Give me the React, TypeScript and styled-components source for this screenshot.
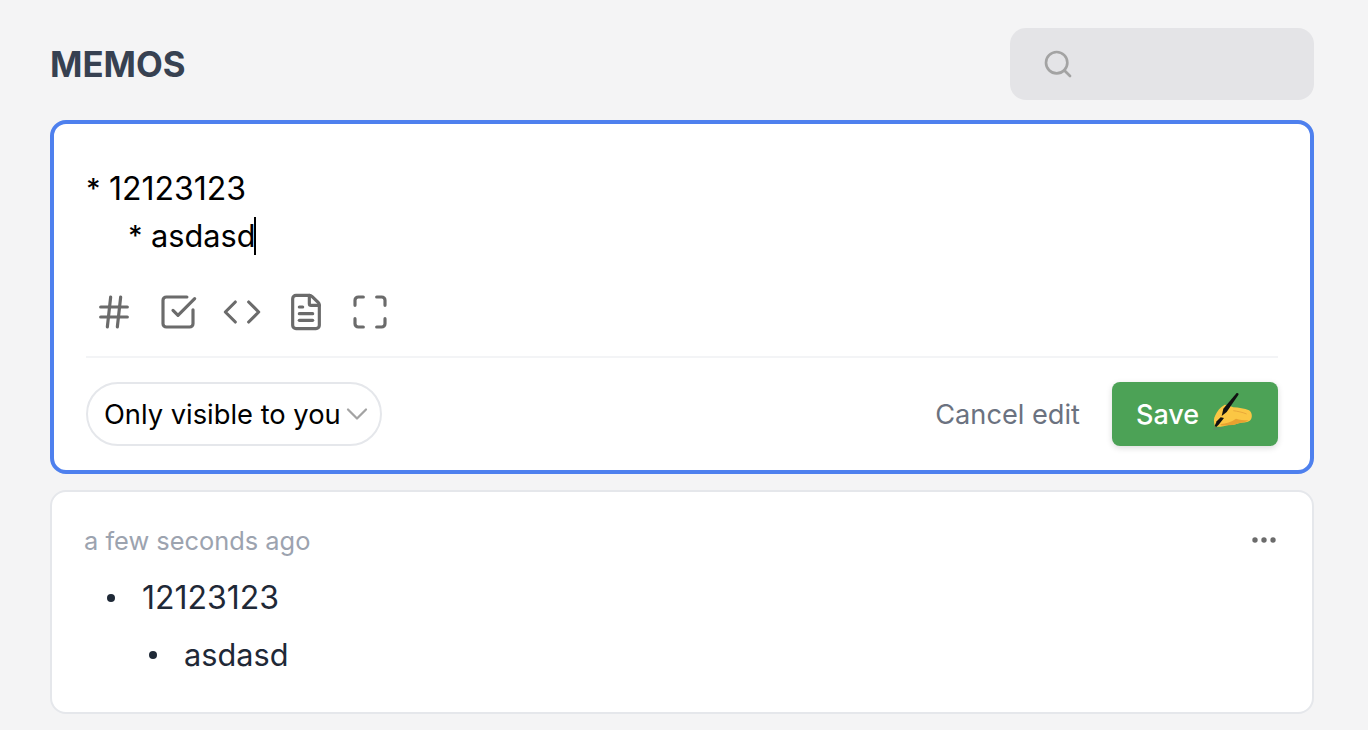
import React from "react";
import styled, { createGlobalStyle } from "styled-components";
import { Search, Hash, SquareCheckBig, Code, FileText, Maximize, ChevronDown } from "lucide-react";

const Global = createGlobalStyle`
  html, body { margin: 0; padding: 0; background: #f4f4f5; height: 100%; overflow: hidden; }
  body { font-family: Inter, "Liberation Sans", sans-serif; }
`;

const Page = styled.main`
  display: flex;
  flex-direction: column;
  padding: 28px 54px 0 50px;
  height: 730px;
  box-sizing: border-box;
`;

const Header = styled.header`
  display: flex;
  align-items: center;
  justify-content: space-between;
  height: 72px;
  margin-bottom: 20px;
`;

const Title = styled.h1`
  margin: 0;
  font-size: 34.8px;
  font-weight: 700;
  color: #374151;
`;

const SearchBox = styled.div`
  display: flex;
  align-items: center;
  width: 304px;
  height: 72px;
  padding-left: 32px;
  box-sizing: border-box;
  border-radius: 16px;
  background: #e4e4e7;
  color: #a3a3a3;
`;

const Editor = styled.section`
  display: flex;
  flex-direction: column;
  border: 4px solid #4e80ee;
  border-radius: 16px;
  background: #fff;
  padding: 42px 32px 24px;
  margin-bottom: 16px;
`;

const EditorText = styled.div`
  height: 95px;
  font-size: 30.7px;
  line-height: 47px;
  color: #000;
  white-space: pre;
`;

const EditorLine = styled.div<{ $indent?: boolean }>`
  height: 47px;
  margin-top: ${(p) => (p.$indent ? 0 : -1)}px;
  padding-left: ${(p) => (p.$indent ? 42 : 0)}px;
`;

const Star = styled.span`
  display: inline-block;
  width: 23px;
  font-size: 28px;
  font-weight: 500;
  vertical-align: 1px;
`;

const Digits = styled.span`
  font-size: 32px;
`;

const Caret = styled.span`
  display: inline-block;
  width: 2px;
  height: 38px;
  margin-left: -1px;
  background: #000;
  vertical-align: -8px;
`;

const Tools = styled.div`
  display: flex;
  gap: 24px;
  height: 97px;
  box-sizing: border-box;
  padding: 31px 8px 0;
  color: #6b6b6b;
  border-bottom: 2px solid #f3f4f6;
`;

const Actions = styled.div`
  display: flex;
  align-items: center;
  justify-content: space-between;
  margin-top: 24px;
`;

const Visibility = styled.div`
  display: flex;
  align-items: center;
  width: 296px;
  height: 64px;
  box-sizing: border-box;
  padding-left: 16px;
  border: 2px solid #e5e7eb;
  border-radius: 32px;
  font-size: 27.3px;
  color: #000;
  white-space: nowrap;
  svg { margin-left: -2px; color: #a3a3a3; flex: none; }
`;

const Buttons = styled.div`
  display: flex;
  align-items: center;
  gap: 32px;
`;

const Cancel = styled.span`
  font-size: 27.2px;
  color: #6b7280;
`;

const Save = styled.button`
  display: flex;
  align-items: center;
  width: 166px;
  height: 64px;
  box-sizing: border-box;
  padding: 0 0 0 24px;
  border: 0;
  border-radius: 8px;
  background: #4ca256;
  box-shadow: 0 2px 6px rgba(0, 0, 0, 0.14);
  color: #fff;
  font: 500 27px Inter, sans-serif;
  svg { margin: -4px 0 0 7px; flex: none; }
`;

const Memo = styled.article`
  border: 2px solid #e5e7eb;
  border-radius: 16px;
  background: #fff;
  padding: 30px 32px 0;
  height: 224px;
  box-sizing: border-box;
`;

const MemoHead = styled.div`
  display: flex;
  align-items: center;
  justify-content: space-between;
  height: 36px;
  margin-bottom: 11px;
  color: #9ca3af;
  font-size: 25.4px;
`;

const Dots = styled.svg`
  display: block;
  color: #6b6b6b;
  margin-right: 4px;
`;

const Item = styled.div<{ $depth: number }>`
  display: flex;
  align-items: center;
  height: 57px;
  padding-left: ${(p) => 23 + p.$depth * 42}px;
  font-size: 30.7px;
  color: #1f2937;
  &::before {
    content: "";
    width: 8px;
    height: 8px;
    border-radius: 50%;
    background: #1f2937;
    margin-right: 27px;
  }
`;

const PenHand = () => (
  <svg width="52" height="48" viewBox="0 0 156 144" aria-hidden="true">
    <path d="M27 116 C23 104 22 92 28 82 C33 70 42 58 56 50 C66 50 74 55 82 58 C98 59 116 62 129 67 C138 72 140 86 135 94 C130 102 118 104 106 104 C94 106 84 112 70 110 C56 114 42 118 27 116 Z" fill="#fbc744" />
    <path d="M44 108 C60 106 76 102 90 92 C100 96 112 97 128 97 C120 104 108 104 98 106 C84 112 62 114 44 112 Z" fill="#e8a130" />
    <path d="M82 68 C94 70 108 72 122 78" stroke="#eaa93a" strokeWidth="3" fill="none" />
    <path d="M92 15 C96 14 99 17 97 21 L62 72 L47 84 L52 62 Z" fill="#111" />
    <path d="M44 88 L54 90 L38 110 L30 118 L26 114 L32 100 Z" fill="#111" />
    <path d="M28 116 L23 124 L50 121" stroke="#5f8a66" strokeWidth="3" fill="none" />
  </svg>
);

export default function App() {
  return (
    <Page>
      <Global />
      <Header>
        <Title>MEMOS</Title>
        <SearchBox>
          <Search size={32} strokeWidth={2} />
        </SearchBox>
      </Header>
      <Editor>
        <EditorText>
          <EditorLine>
            <Star>*</Star>
            <Digits>12123123</Digits>
          </EditorLine>
          <EditorLine $indent>
            <Star>*</Star>asdasd
            <Caret />
          </EditorLine>
        </EditorText>
        <Tools>
          <Hash size={40} strokeWidth={1.9} />
          <SquareCheckBig size={40} strokeWidth={1.9} />
          <Code size={40} strokeWidth={1.9} />
          <FileText size={40} strokeWidth={1.9} />
          <Maximize size={40} strokeWidth={1.9} />
        </Tools>
        <Actions>
          <Visibility>
            Only visible to you
            <ChevronDown size={36} strokeWidth={1.5} />
          </Visibility>
          <Buttons>
            <Cancel>Cancel edit</Cancel>
            <Save>
              Save
              <PenHand />
            </Save>
          </Buttons>
        </Actions>
      </Editor>
      <Memo>
        <MemoHead>
          a few seconds ago
          <Dots width="24" height="6" viewBox="0 0 24 6">
            <circle cx="3" cy="3" r="2.7" fill="currentColor" />
            <circle cx="12" cy="3" r="2.7" fill="currentColor" />
            <circle cx="21" cy="3" r="2.7" fill="currentColor" />
          </Dots>
        </MemoHead>
        <Item $depth={0}><Digits>12123123</Digits></Item>
        <Item $depth={1}>asdasd</Item>
      </Memo>
    </Page>
  );
}
